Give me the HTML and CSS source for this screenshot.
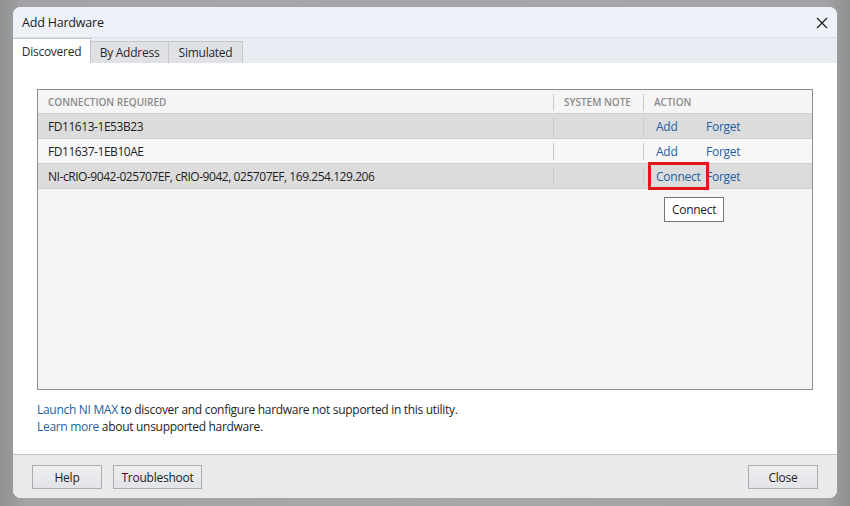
FILE: index.html
```html
<!DOCTYPE html>
<html>
<head>
<meta charset="utf-8">
<link rel="stylesheet" href="styles.css">
</head>
<body>
<div class="window">
  <div class="titlebar">
    <span class="title">Add Hardware</span>
    <svg class="close" width="12" height="12" viewBox="0 0 12 12"><path d="M1 1 L11 11 M11 1 L1 11" stroke="#1a1a1a" stroke-width="1.2" fill="none"/></svg>
  </div>
  <div class="tabs">
    <div class="tab active">Discovered</div>
    <div class="tab">By Address</div>
    <div class="tab">Simulated</div>
  </div>
  <div class="content">
    <div class="table">
      <div class="row head">
        <div class="c1">CONNECTION REQUIRED</div>
        <div class="c2"><span class="sep"></span>SYSTEM NOTE</div>
        <div class="c3"><span class="sep"></span>ACTION</div>
      </div>
      <div class="row dark">
        <div class="c1">FD11613-1E53B23</div>
        <div class="c2"><span class="sep"></span></div>
        <div class="c3"><span class="sep"></span><a class="act first">Add</a><a class="act">Forget</a></div>
      </div>
      <div class="row light">
        <div class="c1">FD11637-1EB10AE</div>
        <div class="c2"><span class="sep"></span></div>
        <div class="c3"><span class="sep"></span><a class="act first">Add</a><a class="act">Forget</a></div>
      </div>
      <div class="row dark">
        <div class="c1">NI-cRIO-9042-025707EF, cRIO-9042, 025707EF, 169.254.129.206</div>
        <div class="c2"><span class="sep"></span></div>
        <div class="c3"><span class="sep"></span><a class="act first">Connect</a><a class="act">Forget</a>
          <span class="highlight"></span>
          <span class="tooltip">Connect</span>
        </div>
      </div>
    </div>
    <div class="notes">
      <div><a class="link">Launch NI MAX</a> to discover and configure hardware not supported in this utility.</div>
      <div><a class="link">Learn more</a> about unsupported hardware.</div>
    </div>
  </div>
  <div class="footer">
    <div class="left">
      <button class="btn w69">Help</button>
      <button class="btn w88">Troubleshoot</button>
    </div>
    <button class="btn w69">Close</button>
  </div>
</div>
</body>
</html>
```
FILE: styles.css
```css
* { box-sizing: border-box; }
html, body { margin: 0; padding: 0; }
body {
  width: 850px;
  height: 506px;
  background: linear-gradient(to right, #8f9091 0%, #a3a4a5 3%, #a6a7a8 50%, #a3a4a5 97%, #8f9091 100%);
  font-family: "Open Sans", "Noto Sans", sans-serif;
  font-size: 12px;
  color: #1e1e1e;
  overflow: hidden;
  padding: 7px 13px 0 13px;
}
.window {
  width: 824px;
  height: 491px;
  background: #fff;
  border-radius: 8px;
  overflow: hidden;
  display: flex;
  flex-direction: column;
}
.titlebar {
  height: 31px;
  background: #eef2f8;
  border-bottom: 1px solid #dadee4;
  display: flex;
  align-items: center;
  justify-content: space-between;
  padding: 0 9px 0 9px;
  flex: none;
}
.title { font-size: 12.5px; color: #1a1a1a; letter-spacing: -0.2px; }
.close { margin-top: 1px; }
.tabs {
  height: 25px;
  background: #e9edf3;
  display: flex;
  align-items: flex-end;
  flex: none;
}
.tab {
  height: 22px;
  padding: 0;
  background: #dfe1e4;
  border: 1px solid #c3c6ca;
  border-bottom: none;
  border-left: none;
  display: flex;
  align-items: center;
  justify-content: center;
  font-size: 12px;
  letter-spacing: -0.25px;
  color: #2a2a2a;
  white-space: nowrap;
}
.tab.active {
  height: 25px;
  background: #fff;
  width: 78px;
}
.tab:nth-child(2) { width: 78px; }
.tab:nth-child(3) { width: 74px; }
.content {
  flex: 1;
  background: #fff;
  padding: 26px 24px 0 24px;
}
.table {
  height: 301px;
  border: 1px solid #8e8e8e;
  background: #f5f5f5;
}
.row {
  height: 25px;
  display: flex;
  align-items: center;
  border-bottom: 1px solid #d0d0d0;
}
.row.head { height: 24px; background: #f5f5f5; font-size: 10px; color: #8a8a8a; font-weight: 600; letter-spacing: 0; padding-top: 1px; }
.row.dark { background: #dcdcdc; }
.row.light { background: #f7f7f7; }
.c1 { width: 515px; padding-left: 10px; white-space: nowrap; letter-spacing: -0.45px; }
.row.head .c1 { letter-spacing: 0; }
.c2 { width: 90px; display: flex; align-items: center; height: 100%; }
.c3 { flex: 1; display: flex; align-items: center; height: 100%; position: relative; }
.sep { width: 1px; height: 17px; background: #c9c9c9; margin-right: 10px; }
.act { color: #1f5f9f; letter-spacing: -0.25px; }
.act.first { display: inline-block; min-width: 47px; margin-right: 3px; margin-left: 2px; }
.highlight {
  position: absolute;
  left: 5px;
  top: -2px;
  width: 61px;
  height: 28px;
  border: 3px solid #e3151f;
}
.tooltip {
  position: absolute;
  left: 21px;
  top: 33px;
  height: 25px;
  padding: 0 7px;
  border: 1px solid #767676;
  background: #fff;
  display: flex;
  align-items: center;
  font-size: 12px;
  letter-spacing: -0.3px;
  color: #1e1e1e;
  white-space: nowrap;
}
.notes { margin-top: 11px; line-height: 17px; letter-spacing: -0.3px; }
.link { color: #1f5f9f; }
.footer {
  flex: none;
  height: 44px;
  background: #e9eaec;
  border-top: 1px solid #c4c4c4;
  display: flex;
  align-items: center;
  justify-content: space-between;
  padding: 0 19px 0 19px;
}
.left { display: flex; gap: 11px; }
.btn {
  height: 24px;
  border: 1px solid #adadad;
  background: linear-gradient(#eceef0, #e2e4e7);
  font-family: "Open Sans", "Noto Sans", sans-serif;
  font-size: 12px;
  letter-spacing: -0.25px;
  color: #1e1e1e;
  padding: 0;
  margin-top: 1px;
}
.w69 { width: 70px; }
.w88 { width: 89px; }
```
